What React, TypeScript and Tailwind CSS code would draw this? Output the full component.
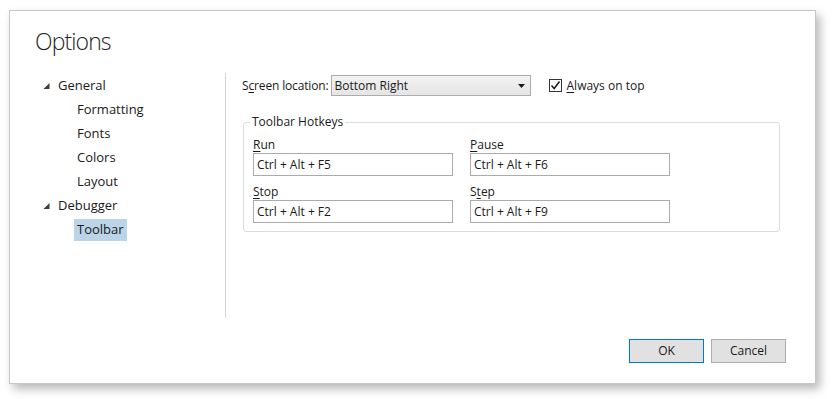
import { useState } from "react";

const font = { fontFamily: '"Segoe UI", "Open Sans", "Noto Sans", sans-serif' };

const tree = [
  { label: "General", depth: 0, open: true },
  { label: "Formatting", depth: 1 },
  { label: "Fonts", depth: 1 },
  { label: "Colors", depth: 1 },
  { label: "Layout", depth: 1 },
  { label: "Debugger", depth: 0, open: true },
  { label: "Toolbar", depth: 1 },
];

const hotkeys = [
  { pre: "", key: "R", post: "un", value: "Ctrl + Alt + F5" },
  { pre: "", key: "P", post: "ause", value: "Ctrl + Alt + F6" },
  { pre: "", key: "S", post: "top", value: "Ctrl + Alt + F2" },
  { pre: "S", key: "t", post: "ep", value: "Ctrl + Alt + F9" },
];

function Expander() {
  return (
    <svg width="7" height="6" viewBox="0 0 7 6" className="shrink-0">
      <polygon points="6.5,0 6.5,6 0.5,6" fill="#3c3c3c" />
    </svg>
  );
}

function Key({ children }: { children: string }) {
  return <span className="underline underline-offset-[2px] decoration-[1px]">{children}</span>;
}

export default function App() {
  const [selected, setSelected] = useState("Toolbar");
  const [onTop, setOnTop] = useState(true);

  return (
    <div className="min-h-[399px] w-[835px] bg-white pt-[10px] pl-[9px] text-[#1a1a1a]" style={font}>
      <div className="flex h-[374px] w-[807px] flex-col border border-[#c6c6c6] bg-white shadow-[4px_5px_9px_rgba(0,0,0,0.28)]">
        <div className="h-[62px] pl-[25px] pt-[18px] text-[23px] leading-[24px] font-light tracking-[-0.9px] text-[#1e1e1e]">
          Options
        </div>

        <div className="flex h-[245px]">
          <div className="w-[216px] border-r border-[#d4d4d4] pl-[33px] pt-[1px] text-[13px]">
            {tree.map((item) => (
              <div key={item.label} className="flex h-[24px] items-center">
                {item.depth === 0 ? (
                  <>
                    <Expander />
                    <span className="ml-[8px]">{item.label}</span>
                  </>
                ) : (
                  <button
                    onClick={() => setSelected(item.label)}
                    className={`ml-[31px] flex h-[22px] items-center px-[3px] ${
                      selected === item.label ? "bg-[#bcd4e8]" : ""
                    }`}
                  >
                    {item.label}
                  </button>
                )}
              </div>
            ))}
          </div>

          <div className="flex-1 pl-[16px] pt-[2px] text-[12px]">
            <div className="flex h-[21px] items-center">
              <span className="tracking-[-0.15px]">
                S<Key>c</Key>reen location:
              </span>
              <div className="ml-[2px] flex h-[21px] w-[200px] items-center justify-between border border-[#acacac] bg-gradient-to-b from-[#f2f2f2] to-[#e5e5e5] pl-[3px] pr-[5px]">
                <span>Bottom Right</span>
                <svg width="7" height="4" viewBox="0 0 7 4">
                  <polygon points="0,0 7,0 3.5,4" fill="#1a1a1a" />
                </svg>
              </div>
              <label className="ml-[18px] flex cursor-pointer items-center gap-[5px]" onClick={() => setOnTop(!onTop)}>
                <span className="flex h-[13px] w-[13px] items-center justify-center border border-[#333] bg-white">
                  {onTop && (
                    <svg width="11" height="11" viewBox="0 0 11 11">
                      <path d="M1.5 5.5 L4.2 8.5 L9.5 1.5" fill="none" stroke="#1a1a1a" strokeWidth="1.5" />
                    </svg>
                  )}
                </span>
                <span>
                  <Key>A</Key>lways on top
                </span>
              </label>
            </div>

            <fieldset className="ml-[1px] mt-[18px] w-[537px] rounded-[3px] border border-[#dcdcdc] px-[9px] pb-[8px] pt-[7px]">
              <legend className="ml-[-3px] px-[2px] leading-[16px]">Toolbar Hotkeys</legend>
              <div className="grid grid-cols-[200px_200px] gap-x-[17px] gap-y-[8px]">
                {hotkeys.map((h) => (
                  <div key={h.value} className="flex flex-col">
                    <span className="h-[16px] leading-[16px]">
                      {h.pre}
                      <Key>{h.key}</Key>
                      {h.post}
                    </span>
                    <input
                      defaultValue={h.value}
                      className="h-[23px] w-[200px] border border-[#ababab] px-[3px] text-[12px] outline-none"
                      style={font}
                    />
                  </div>
                ))}
              </div>
            </fieldset>
          </div>
        </div>

        <div className="mt-[21px] flex justify-end gap-[7px] pr-[29px] text-[12px]">
          <button className="h-[24px] w-[75px] border border-[#0078d7] bg-[#e1e1e1]">OK</button>
          <button className="h-[24px] w-[75px] border border-[#adadad] bg-[#e1e1e1]">Cancel</button>
        </div>
      </div>
    </div>
  );
}
